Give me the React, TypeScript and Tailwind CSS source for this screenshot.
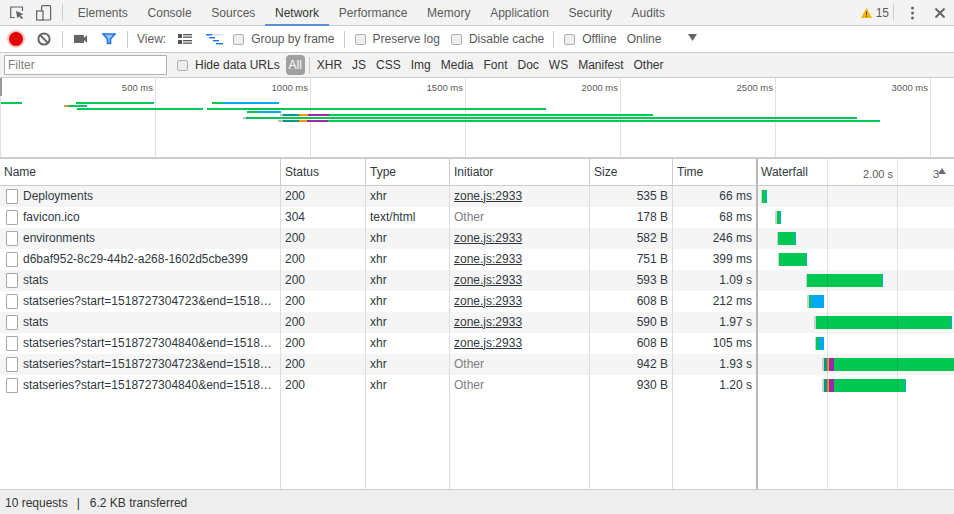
const TABS = ["Elements", "Console", "Sources", "Network", "Performance", "Memory", "Application", "Security", "Audits"];
const TYPES = ["XHR", "JS", "CSS", "Img", "Media", "Font", "Doc", "WS", "Manifest", "Other"];

// [top, start, end, colour] in page pixels, drawn over the overview
const OVERVIEW: [number, number, number, string][] = [
  [102, 1, 21, "bg-[#00c853]"],
  [102, 21, 22, "bg-[#03a9f4]"],
  [102, 76, 153, "bg-[#00c853]"],
  [102, 153, 154, "bg-[#03a9f4]"],
  [102, 212, 223, "bg-[#00c853]"],
  [102, 223, 279, "bg-[#03a9f4]"],
  [105, 64, 65, "bg-[#9e9e9e]"],
  [105, 65, 68, "bg-[#ff9800]"],
  [105, 68, 85, "bg-[#00c853]"],
  [105, 85, 87, "bg-[#03a9f4]"],
  [108, 77, 203, "bg-[#00c853]"],
  [108, 207, 546, "bg-[#00c853]"],
  [111, 247, 258, "bg-[#00c853]"],
  [111, 258, 281, "bg-[#03a9f4]"],
  [114, 280, 283, "bg-[#bdbdbd]"],
  [114, 283, 299, "bg-[#009688]"],
  [114, 299, 308, "bg-[#ff9800]"],
  [114, 308, 329, "bg-[#9c27b0]"],
  [114, 329, 653, "bg-[#00c853]"],
  [117, 243, 246, "bg-[#bdbdbd]"],
  [117, 246, 856, "bg-[#00c853]"],
  [117, 856, 857, "bg-[#03a9f4]"],
  [120, 278, 283, "bg-[#bdbdbd]"],
  [120, 283, 299, "bg-[#009688]"],
  [120, 299, 307, "bg-[#ff9800]"],
  [120, 307, 328, "bg-[#9c27b0]"],
  [120, 328, 879, "bg-[#00c853]"],
  [120, 879, 880, "bg-[#03a9f4]"],
];

type Seg = [number, number, string];
const G = "bg-[#00c853]";
const B = "bg-[#03a9f4]";
const W = "bg-[#cfcfcf]";
const T = "bg-[#009688]";
const O = "bg-[#ff9800]";
const P = "bg-[#9c27b0]";

const ROWS: { name: string; status: string; type: string; init: string; size: string; time: string; bars: Seg[] }[] = [
  { name: "Deployments", status: "200", type: "xhr", init: "zone.js:2933", size: "535 B", time: "66 ms", bars: [[761, 762, W], [762, 766, G], [766, 767, B]] },
  { name: "favicon.ico", status: "304", type: "text/html", init: "Other", size: "178 B", time: "68 ms", bars: [[775, 777, W], [777, 780, G], [780, 781, B]] },
  { name: "environments", status: "200", type: "xhr", init: "zone.js:2933", size: "582 B", time: "246 ms", bars: [[777, 778, W], [778, 795, G], [795, 796, B]] },
  { name: "d6baf952-8c29-44b2-a268-1602d5cbe399", status: "200", type: "xhr", init: "zone.js:2933", size: "751 B", time: "399 ms", bars: [[778, 779, W], [779, 806, G], [806, 807, B]] },
  { name: "stats", status: "200", type: "xhr", init: "zone.js:2933", size: "593 B", time: "1.09 s", bars: [[806, 807, W], [807, 882, G], [882, 883, B]] },
  { name: "statseries?start=1518727304723&end=1518…", status: "200", type: "xhr", init: "zone.js:2933", size: "608 B", time: "212 ms", bars: [[807, 809, W], [809, 811, G], [811, 824, B]] },
  { name: "stats", status: "200", type: "xhr", init: "zone.js:2933", size: "590 B", time: "1.97 s", bars: [[814, 816, W], [816, 951, G], [951, 952, B]] },
  { name: "statseries?start=1518727304840&end=1518…", status: "200", type: "xhr", init: "zone.js:2933", size: "608 B", time: "105 ms", bars: [[815, 816, W], [816, 819, G], [819, 824, B]] },
  { name: "statseries?start=1518727304723&end=1518…", status: "200", type: "xhr", init: "Other", size: "942 B", time: "1.93 s", bars: [[822, 824, W], [824, 827, T], [827, 829, O], [829, 834, P], [834, 954, G]] },
  { name: "statseries?start=1518727304840&end=1518…", status: "200", type: "xhr", init: "Other", size: "930 B", time: "1.20 s", bars: [[822, 824, W], [824, 827, T], [827, 829, O], [829, 834, P], [834, 905, G], [905, 906, B]] },
];

function Check({ label, className }: { label: string; className: string }) {
  return (
    <div className={`flex items-center ${className}`}>
      <span className="w-[11px] h-[11px] rounded-[2px] border border-[#b0b0b0] bg-[#eeeeee]" />
      <span className="ml-[7px]">{label}</span>
    </div>
  );
}

function Divider({ className }: { className: string }) {
  return <span className={`w-px h-[17px] bg-[#cccccc] ${className}`} />;
}

function Row({ row, index }: { row: (typeof ROWS)[number]; index: number }) {
  return (
    <div className={`flex h-[21px] items-center ${index % 2 === 0 ? "bg-[#f5f5f5]" : "bg-white"}`}>
      <div className="w-[281px] h-full shrink-0 flex items-center border-r border-[#dddddd] pl-[6px] pr-[8px]">
        <span className="w-[12px] h-[15px] shrink-0 bg-white border border-[#a8a8a8] rounded-[1px]" />
        <span className="ml-[5px] truncate pb-[2px]">{row.name}</span>
      </div>
      <div className="w-[85px] h-full shrink-0 flex items-center border-r border-[#dddddd] pl-[4px] pb-[2px]">{row.status}</div>
      <div className="w-[84px] h-full shrink-0 flex items-center border-r border-[#dddddd] pl-[4px] pb-[2px]">{row.type}</div>
      <div className={`w-[140px] h-full shrink-0 flex items-center border-r border-[#dddddd] pl-[4px] pb-[2px] ${row.init === "Other" ? "text-[#808080]" : "underline"}`}>
        {row.init}
      </div>
      <div className="w-[83px] h-full shrink-0 flex items-center justify-end border-r border-[#dddddd] pr-[4px] pb-[2px]">{row.size}</div>
      <div className="w-[85px] h-full shrink-0 flex items-center justify-end border-r-2 border-[#b8b8b8] pr-[4px] pb-[2px]">{row.time}</div>
      <div className="relative flex-1 h-full">
        {row.bars.map(([from, to, colour]) => (
          <span
            key={from}
            className={`absolute top-[4px] h-[13px] ${colour}`}
            style={{ left: from - 758, width: to - from }}
          />
        ))}
      </div>
    </div>
  );
}

export default function App() {
  return (
    <div className="w-[954px] h-[514px] overflow-hidden flex flex-col bg-white text-[12px] text-[#303942] font-['Liberation_Sans',Arial,sans-serif]">
      {/* Tab strip */}
      <div className="h-[26px] shrink-0 flex items-stretch bg-[#f3f3f3] border-b border-[#cccccc]">
        <div className="flex items-center w-[68px] shrink-0">
          <svg className="ml-[10px]" width="14" height="14" viewBox="0 0 14 14" fill="none">
            <path d="M12.5 5V1H0.7v10.5h4" stroke="#5f6368" strokeWidth="1.2" />
            <path d="M6 5l7.5 3-3 1.2 2.5 2.8-1.3 1.2-2.4-3-2 2z" fill="#5f6368" />
          </svg>
          <svg className="ml-[12px]" width="16" height="17" viewBox="0 0 16 17" fill="none">
            <rect x="5.6" y="1.6" width="9" height="14.4" rx="1" stroke="#5f6368" strokeWidth="1.2" />
            <rect x="0.6" y="7" width="6.4" height="9" fill="#f3f3f3" stroke="#5f6368" strokeWidth="1.2" />
          </svg>
          <span className="ml-[10px] w-px h-[17px] bg-[#cccccc]" />
        </div>
        {TABS.map((tab) => (
          <div
            key={tab}
            className={`px-[9.85px] flex items-center ${tab === "Network" ? "text-[#333333] border-b-2 border-[#5a8fe0] h-[26px] pt-[2px]" : "text-[#5a5a5a]"}`}
          >
            {tab}
          </div>
        ))}
        <div className="ml-auto flex items-center text-[#5a5a5a]">
          <svg width="11" height="10" viewBox="0 0 11 10">
            <path d="M5.5 0L11 10H0z" fill="#f4b400" />
            <rect x="5" y="3.5" width="1" height="3.5" fill="#5a3d00" />
            <rect x="5" y="7.7" width="1" height="1.2" fill="#5a3d00" />
          </svg>
          <span className="ml-[4px]">15</span>
          <span className="ml-[4px] w-px h-[17px] bg-[#cccccc]" />
          <svg className="ml-[17px]" width="3" height="14" viewBox="0 0 3 14" fill="#666666">
            <circle cx="1.5" cy="2" r="1.5" />
            <circle cx="1.5" cy="7" r="1.5" />
            <circle cx="1.5" cy="12" r="1.5" />
          </svg>
          <svg className="ml-[21px] mr-[9px]" width="10" height="10" viewBox="0 0 10 10" stroke="#666666" strokeWidth="2">
            <path d="M0.5 0.5l9 9M9.5 0.5l-9 9" />
          </svg>
        </div>
      </div>

      {/* Record / view controls */}
      <div className="h-[27px] shrink-0 flex items-center border-b border-[#cccccc] text-[#5a5a5a]">
        <span className="ml-[9px] w-[14px] h-[14px] rounded-full bg-[#e50000] ring-2 ring-[#f3c6c6]" />
        <svg className="ml-[14px]" width="14" height="14" viewBox="0 0 14 14" fill="none" stroke="#666666" strokeWidth="2">
          <circle cx="7" cy="7" r="5.6" />
          <path d="M3 3l8 8" />
        </svg>
        <Divider className="ml-[11px]" />
        <svg className="ml-[11px]" width="14" height="10" viewBox="0 0 14 10" fill="#666666">
          <rect x="0" y="1" width="10" height="8" />
          <path d="M10 4l3-3v8l-3-3z" />
        </svg>
        <svg className="ml-[14px]" width="14" height="12" viewBox="0 0 14 12" fill="none" stroke="#1a73e8" strokeWidth="1.6">
          <path d="M1 1h12L8.5 6v4.5h-3V6z" fill="#9cc3f5" />
        </svg>
        <Divider className="ml-[11px]" />
        <span className="ml-[9px]">View:</span>
        <svg className="ml-[12px]" width="14" height="11" viewBox="0 0 14 11" fill="#555555">
          <rect x="0" y="0" width="4" height="4" />
          <rect x="0" y="6" width="4" height="4" />
          <rect x="5" y="0" width="9" height="1.3" />
          <rect x="5" y="2.5" width="9" height="1.3" />
          <rect x="5" y="6" width="9" height="1.3" />
          <rect x="5" y="8.5" width="9" height="1.3" />
        </svg>
        <svg className="ml-[14px]" width="17" height="11" viewBox="0 0 17 11">
          <rect x="0" y="0" width="17" height="1.4" fill="#cfe0f7" />
          <rect x="0" y="0" width="6" height="1.4" fill="#1a73e8" />
          <rect x="3" y="3" width="6" height="1.4" fill="#1a73e8" />
          <rect x="7" y="6" width="6" height="1.4" fill="#1a73e8" />
          <rect x="10" y="9" width="7" height="1.4" fill="#1a73e8" />
        </svg>
        <Check label="Group by frame" className="ml-[10px]" />
        <Divider className="ml-[9px]" />
        <Check label="Preserve log" className="ml-[10px]" />
        <Check label="Disable cache" className="ml-[11px]" />
        <Divider className="ml-[9px]" />
        <Check label="Offline" className="ml-[10px]" />
        <span className="ml-[10px]">Online</span>
        <svg className="ml-[27px] mb-[3px]" width="9" height="7" viewBox="0 0 9 7" fill="#666666">
          <path d="M0 0h9L4.5 7z" />
        </svg>
      </div>

      {/* Filter bar */}
      <div className="h-[25px] shrink-0 flex items-center bg-[#f3f3f3] border-b border-[#cccccc] text-[#333333]">
        <div className="ml-[4px] w-[163px] h-[20px] bg-white border border-[#b0b0b0] rounded-[1px] pl-[3px] flex items-center text-[#808080]">
          Filter
        </div>
        <Check label="Hide data URLs" className="ml-[10px]" />
        <span className="ml-[6px] w-[19px] h-[20px] rounded-[4px] bg-[#a0a0a0] text-white flex items-center justify-center">All</span>
        <span className="ml-[4px] w-px h-[17px] bg-[#cccccc]" />
        <div className="ml-[7px] flex items-center gap-[10px]">
          {TYPES.map((type) => (
            <span key={type}>{type}</span>
          ))}
        </div>
      </div>

      {/* Overview timeline */}
      <div className="relative h-[81px] shrink-0 border-b-2 border-[#cccccc] text-[#5a5a5a] text-[9.5px]">
        {[0, 155, 310, 465, 620, 775, 930].map((x) => (
          <span key={x} className="absolute top-0 bottom-0 w-px bg-[#e0e0e0]" style={{ left: x }} />
        ))}
        {["500 ms", "1000 ms", "1500 ms", "2000 ms", "2500 ms", "3000 ms"].map((label, i) => (
          <span key={label} className="absolute top-[3px] leading-[13px]" style={{ right: 954 - 153 - i * 155 }}>
            {label}
          </span>
        ))}
        <span className="absolute left-0 top-0 w-[2px] h-[18px] bg-[#9a9a9a]" />
        {OVERVIEW.map(([top, from, to, colour]) => (
          <span
            key={`${top}-${from}`}
            className={`absolute h-[2px] ${colour}`}
            style={{ top: top - 78, left: from, width: to - from }}
          />
        ))}
      </div>

      {/* Request table */}
      <div className="relative flex-1 min-h-0 flex flex-col">
        <div className="h-[27px] shrink-0 flex items-center border-b border-[#cccccc]">
          <div className="w-[281px] h-full shrink-0 flex items-center border-r border-[#cccccc] pl-[4px]">Name</div>
          <div className="w-[85px] h-full shrink-0 flex items-center border-r border-[#cccccc] pl-[4px]">Status</div>
          <div className="w-[84px] h-full shrink-0 flex items-center border-r border-[#cccccc] pl-[4px]">Type</div>
          <div className="w-[140px] h-full shrink-0 flex items-center border-r border-[#cccccc] pl-[4px]">Initiator</div>
          <div className="w-[83px] h-full shrink-0 flex items-center border-r border-[#cccccc] pl-[4px]">Size</div>
          <div className="w-[85px] h-full shrink-0 flex items-center border-r-2 border-[#b8b8b8] pl-[4px]">Time</div>
          <div className="relative flex-1 h-full flex items-center pl-[3px]">
            Waterfall
            <span className="absolute right-[61px] top-[7px] text-[11px] text-[#5a5a5a]">2.00 s</span>
            <span className="absolute right-[15px] top-[7px] text-[11px] text-[#5a5a5a]">3</span>
            <svg className="absolute right-[8px] top-[9px]" width="8" height="6" viewBox="0 0 8 6" fill="#6e6e6e">
              <path d="M4 0L8 6H0z" />
            </svg>
          </div>
        </div>
        {ROWS.map((row, i) => (
          <Row key={i} row={row} index={i} />
        ))}
        <div className="flex-1 flex">
          <div className="w-[281px] shrink-0 border-r border-[#dddddd]" />
          <div className="w-[85px] shrink-0 border-r border-[#dddddd]" />
          <div className="w-[84px] shrink-0 border-r border-[#dddddd]" />
          <div className="w-[140px] shrink-0 border-r border-[#dddddd]" />
          <div className="w-[83px] shrink-0 border-r border-[#dddddd]" />
          <div className="w-[85px] shrink-0 border-r-2 border-[#b8b8b8]" />
        </div>
        {/* Waterfall grid lines sit over the bars */}
        <span className="absolute left-[827px] top-0 bottom-0 w-px bg-black/10" />
        <span className="absolute left-[897px] top-0 bottom-0 w-px bg-black/10" />
      </div>

      {/* Status bar */}
      <div className="h-[25px] shrink-0 flex items-center bg-[#eeeeee] border-t border-[#cccccc] pl-[5px] pt-[1px] text-[#333333]">
        <span>10 requests</span>
        <span className="ml-[9px]">|</span>
        <span className="ml-[10px]">6.2 KB transferred</span>
      </div>
    </div>
  );
}
